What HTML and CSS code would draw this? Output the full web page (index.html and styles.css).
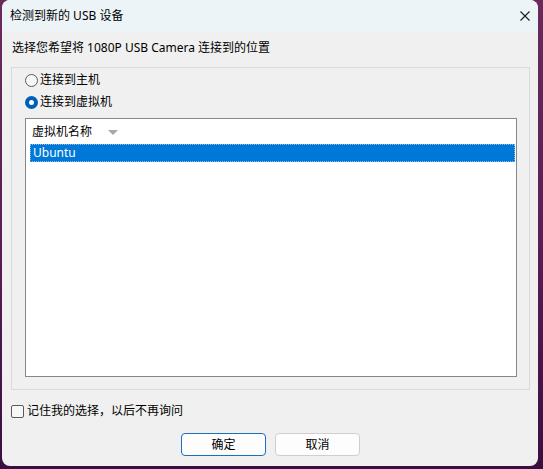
FILE: index.html
```html
<!DOCTYPE html>
<html lang="zh-CN">
<head>
<meta charset="utf-8">
<title>检测到新的 USB 设备</title>
<link rel="stylesheet" href="styles.css">
</head>
<body>
<div class="window">
  <div class="titlebar">
    <span class="title">检测到新的 USB 设备</span>
    <svg class="close" width="10" height="10" viewBox="0 0 10 10" aria-hidden="true">
      <path d="M0.5 0.5 L9.5 9.5 M9.5 0.5 L0.5 9.5" stroke="#1a1a1a" stroke-width="1.1" fill="none"/>
    </svg>
  </div>
  <div class="content">
    <div class="prompt">选择您希望将 1080P USB Camera 连接到的位置</div>
    <div class="group">
      <div class="radio-row"><span class="radio"></span><span>连接到主机</span></div>
      <div class="radio-row"><span class="radio checked"></span><span>连接到虚拟机</span></div>
      <div class="listbox">
        <div class="list-header"><span>虚拟机名称</span><span class="sort-arrow"></span></div>
        <div class="list-row selected">Ubuntu</div>
      </div>
    </div>
    <div class="check-row"><span class="checkbox"></span><span>记住我的选择，以后不再询问</span></div>
    <div class="buttons">
      <button class="btn primary">确定</button>
      <button class="btn">取消</button>
    </div>
  </div>
</div>
</body>
</html>
```

FILE: styles.css
```css
html, body {
  margin: 0;
  padding: 0;
}
body {
  width: 543px;
  height: 469px;
  overflow: hidden;
  background: linear-gradient(180deg, #6a2a5c 0%, #5a1f55 50%, #3b0e40 100%);
  font-family: "Noto Sans", "Noto Sans CJK SC", sans-serif;
  font-size: 12px;
  color: #000;
}
.window {
  margin-left: 2px;
  width: 536px;
  height: 466px;
  background: #f0f0f0;
  border-radius: 8px;
  overflow: hidden;
  display: flex;
  flex-direction: column;
}
.titlebar {
  height: 31px;
  flex: none;
  background: #edf4f7;
  display: flex;
  align-items: center;
  justify-content: space-between;
  padding: 0 8px;
}
.title {
  line-height: 16px;
}
.close {
  display: block;
}
.content {
  padding: 0 8px 0 9px;
  display: flex;
  flex-direction: column;
}
.prompt {
  margin-top: 9px;
  padding-left: 1px;
  line-height: 16px;
}
.group {
  margin-top: 11px;
  height: 323px;
  box-sizing: border-box;
  border: 1px solid #dadada;
  padding: 1px 12px 0 13px;
  display: flex;
  flex-direction: column;
}
.radio-row {
  height: 22px;
  display: flex;
  align-items: center;
  gap: 2px;
  line-height: 16px;
}
.radio {
  width: 13px;
  height: 13px;
  box-sizing: border-box;
  border-radius: 50%;
  border: 1px solid #5a5a5a;
  background: #f7f7f7;
  flex: none;
}
.radio.checked {
  border: 4px solid #005fb8;
  background: #fff;
}
.listbox {
  margin-top: 5px;
  width: 492px;
  height: 259px;
  box-sizing: border-box;
  border: 1px solid #828790;
  background: #fff;
  display: flex;
  flex-direction: column;
}
.list-header {
  height: 25px;
  display: flex;
  align-items: center;
  padding-left: 6px;
  gap: 16px;
  line-height: 16px;
}
.sort-arrow {
  width: 0;
  height: 0;
  border-left: 5px solid transparent;
  border-right: 5px solid transparent;
  border-top: 5px solid #a8a8a8;
  margin-top: 1px;
}
.list-row {
  margin: 0 1px 0 4px;
  height: 18px;
  box-sizing: border-box;
  line-height: 16px;
  padding-left: 2px;
}
.list-row.selected {
  background: #0078d7;
  color: #fff;
  border: 1px dotted #8fb8e0;
}
.check-row {
  margin-top: 10px;
  height: 22px;
  display: flex;
  align-items: center;
  gap: 3px;
  line-height: 16px;
}
.checkbox {
  width: 13px;
  height: 13px;
  box-sizing: border-box;
  border: 1px solid #5a5a5a;
  border-radius: 2px;
  background: #f7f7f7;
  flex: none;
}
.buttons {
  margin-top: 11px;
  display: flex;
  justify-content: center;
  gap: 9px;
}
.btn {
  width: 85px;
  height: 23px;
  box-sizing: border-box;
  border: 1px solid #cfcfcf;
  border-radius: 4px;
  background: #fdfdfd;
  font-family: "Noto Sans", "Noto Sans CJK SC", sans-serif;
  font-size: 12px;
  color: #000;
  padding: 0;
  line-height: 16px;
}
.btn.primary {
  border-color: #1a6fbf;
}
```
